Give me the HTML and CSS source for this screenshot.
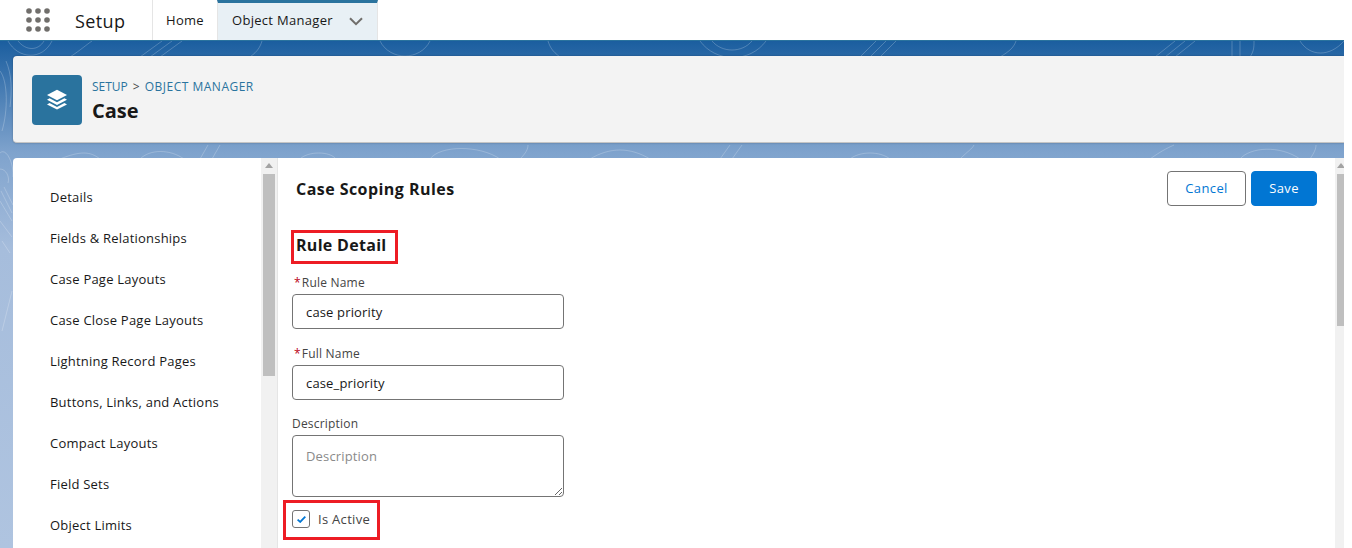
FILE: index.html
```html
<!DOCTYPE html>
<html>
<head>
    <title>Case Scoping Rules</title>
    <link rel="stylesheet" href="styles.css">
</head>
<body>
    <div class="topbar">
        <div class="launcher">
            <svg width="26" height="26" viewBox="0 0 26 26" fill="#706e6b">
                <circle cx="3" cy="3" r="2.8"/><circle cx="12" cy="3" r="2.8"/><circle cx="21" cy="3" r="2.8"/>
                <circle cx="3" cy="12" r="2.8"/><circle cx="12" cy="12" r="2.8"/><circle cx="21" cy="12" r="2.8"/>
                <circle cx="3" cy="21" r="2.8"/><circle cx="12" cy="21" r="2.8"/><circle cx="21" cy="21" r="2.8"/>
            </svg>
        </div>
        <div class="app-name">Setup</div>
        <div class="tab">Home</div>
        <div class="tab tab-active">
            Object Manager
            <svg class="chevron" width="14" height="9" viewBox="0 0 14 9" fill="none" stroke="#706e6b" stroke-width="2">
                <path d="M1 1.2l6 6 6-6"/>
            </svg>
        </div>
    </div>

    <div class="stage">
        <svg class="contours" width="1352" height="508" viewBox="0 0 1352 508" fill="none" stroke="#fff" stroke-opacity="0.22">
            <path d="M8 0c10 18 34 20 44 0M18 0c8 10 20 10 26 0M70 16c12-8 16-12 22-16M140 16l22-16M150 16l22-16M160 16l22-16M250 16c8-6 10-10 12-16M380 0c10 20 40 20 50 0M560 16c-8-6-10-10-12-16M700 0c16 22 50 22 66 0M712 0c10 12 30 12 40 0M860 16l16-16M870 16l16-16M880 16l16-16M1000 16c10-6 14-10 16-16M1155 16l20-16M1165 16l20-16M1175 16l20-16M1232 16V0M1240 16V0M1250 16c4-6 4-10 4-16M1300 0c10 16 30 16 44 0"/>
            <path d="M0 30c8 10 8 40 2 60M6 20c6 14 6 30 4 46M0 112c6-6 14 10 13 24M0 128c6 0 10 8 8 14M1 150l11 22M0 160l12 20M4 146l9 18M0 180l12 16M2 200l8 12M12 250l-10 40"/>
            <path d="M60 118c20-8 30-8 40 0M140 118c10-10 30-10 44 0M200 118l8-14M212 118l8-14M300 118c8-8 30-8 36 0M430 118c10-14 50-14 70 0M520 118c6-6 8-10 8-14M590 118c20-12 40-12 60 0M720 118l10-14M732 118l10-14M850 118c10-8 30-8 40 0M960 118c8-8 12-10 14-14M1150 118c14-10 20-12 24-14M1240 118c10-12 40-14 60 0M1310 118c4-6 6-10 6-14"/>
        </svg>

        <div class="page-header">
            <div class="object-icon">
                <svg width="22" height="22" viewBox="0 0 22 22" fill="#fff">
                    <path d="M11 0.8l10 5.2-10 5.2-10-5.2z"/>
                    <path d="M3.6 9.3l7.4 3.9 7.4-3.9 2.6 1.4-10 5.2-10-5.2z"/>
                    <path d="M3.6 14l7.4 3.9 7.4-3.9 2.6 1.4-10 5.2-10-5.2z"/>
                </svg>
            </div>
            <div class="header-text">
                <div class="crumbs"><span class="crumb">SETUP</span><span class="crumb-sep">&gt;</span><span class="crumb crumb-wide">OBJECT MANAGER</span></div>
                <div class="object-name">Case</div>
            </div>
        </div>

        <div class="panels">
            <div class="sidebar">
                <ul class="side-list">
                    <li>Details</li>
                    <li>Fields &amp; Relationships</li>
                    <li>Case Page Layouts</li>
                    <li>Case Close Page Layouts</li>
                    <li>Lightning Record Pages</li>
                    <li>Buttons, Links, and Actions</li>
                    <li>Compact Layouts</li>
                    <li>Field Sets</li>
                    <li>Object Limits</li>
                </ul>
                <div class="scroll scroll-side">
                    <div class="scroll-arrow"></div>
                    <div class="scroll-thumb thumb-side"></div>
                </div>
            </div>

            <div class="main">
                <div class="main-body">
                    <div class="main-head">
                        <h1 class="rule-title">Case Scoping Rules</h1>
                        <div class="actions">
                            <button class="btn btn-cancel">Cancel</button>
                            <button class="btn btn-save">Save</button>
                        </div>
                    </div>

                    <h2 class="section-title"><span class="mark mark-title">Rule Detail</span></h2>

                    <div class="field">
                        <label class="field-label"><span class="req">*</span>Rule Name</label>
                        <input class="input" type="text" value="case priority">
                    </div>
                    <div class="field">
                        <label class="field-label"><span class="req">*</span>Full Name</label>
                        <input class="input" type="text" value="case_priority">
                    </div>
                    <div class="field field-tight">
                        <label class="field-label">Description</label>
                        <textarea class="input textarea" placeholder="Description"></textarea>
                    </div>
                    <div class="mark mark-check">
                        <span class="checkbox">
                            <svg width="9" height="7" viewBox="0 0 9 7" fill="none" stroke="#0176d3" stroke-width="1.8">
                                <path d="M0.6 3.6l2.6 2.3 5.1-5.2"/>
                            </svg>
                        </span>
                        Is Active
                    </div>
                </div>
                <div class="scroll scroll-main">
                    <div class="scroll-arrow"></div>
                    <div class="scroll-thumb thumb-main"></div>
                </div>
            </div>
        </div>
    </div>
</body>
</html>
```

FILE: styles.css
```css
html, body {
    height: 100%;
}

body {
    font-family: "Open Sans", Arial, sans-serif;
    font-size: 13px;
    letter-spacing: 0.3px;
    color: #181818;
    margin: 0;
    padding: 0;
    overflow: hidden;
    background-color: #fff;
}

.topbar {
    height: 40px;
    display: flex;
    background-color: #fff;
}

.launcher {
    width: 75px;
    padding: 8px 0 0 26px;
    box-sizing: border-box;
}

.app-name {
    width: 77px;
    font-size: 18px;
    line-height: 42px;
    letter-spacing: 0.4px;
    color: #181818;
}

.tab {
    width: 65px;
    box-sizing: border-box;
    padding: 0 13px;
    line-height: 40px;
    border-left: 1px solid #e5e5e5;
}

.tab-active {
    width: 161px;
    display: flex;
    align-items: center;
    justify-content: space-between;
    padding: 0 14px 3px;
    background-color: #e8f0f5;
    border-top: 3px solid #2a739e;
    border-right: 1px solid #e5e5e5;
    line-height: 34px;
}

.chevron {
    margin: 2px 0 0 0;
}

.stage {
    position: relative;
    width: 1344px;
    height: 508px;
    box-sizing: border-box;
    padding: 15px 0 0 13px;
    border-top: 1px solid #2a739e;
    background: linear-gradient(180deg, #1b5e9f 0%, #7fa3cd 22%, #a6bddc 41%, #afc4e0 100%);
    overflow: hidden;
}

.contours {
    position: absolute;
    left: 0;
    top: 0;
}

.page-header {
    position: relative;
    height: 87px;
    box-sizing: border-box;
    display: flex;
    align-items: center;
    gap: 10px;
    padding: 2px 0 0 19px;
    background-color: #f3f3f3;
    border-radius: 4px 0 0 4px;
    border-bottom: 1px solid #c4c4c4;
    box-shadow: 0 0 2px rgba(0, 0, 0, 0.3);
}

.object-icon {
    width: 50px;
    height: 50px;
    border-radius: 4px;
    background-color: #2a739e;
    display: flex;
    align-items: center;
    justify-content: center;
}

.header-text {
    margin-top: 4px;
}

.crumbs {
    font-size: 12px;
    line-height: 18px;
    letter-spacing: 0;
    color: #444;
}

.crumb {
    color: #2a739e;
}

.crumb-sep {
    margin: 0 5px;
}

.crumb-wide {
    letter-spacing: 0.5px;
}

.object-name {
    font-size: 20px;
    font-weight: 700;
    line-height: 30px;
    letter-spacing: 0;
}

.panels {
    position: relative;
    display: flex;
    height: 390px;
    margin-top: 15px;
}

.sidebar {
    width: 264px;
    display: flex;
    background-color: #fff;
    border-radius: 4px 0 0 0;
    border-right: 1px solid #e5e5e5;
}

.side-list {
    flex: 1;
    list-style: none;
    margin: 0;
    padding: 19px 0 0 37px;
    letter-spacing: 0.22px;
}

.side-list li {
    height: 41px;
    line-height: 41px;
}

.scroll {
    width: 16px;
    background-color: #f1f1f1;
    box-sizing: border-box;
    padding: 0 2px;
}

.scroll-arrow {
    width: 0;
    height: 0;
    margin: 5px auto 6px;
    border-left: 4px solid transparent;
    border-right: 4px solid transparent;
    border-bottom: 5px solid #a3a3a3;
}

.scroll-thumb {
    background-color: #bfbfbf;
}

.thumb-side {
    height: 202px;
}

.thumb-main {
    height: 152px;
}

.main {
    flex: 1;
    display: flex;
    background-color: #fff;
}

.main-body {
    flex: 1;
    padding-left: 14px;
}

.main-head {
    display: flex;
    justify-content: space-between;
    align-items: center;
    height: 34px;
    margin: 13px 0 0 4px;
    padding-right: 18px;
}

.rule-title {
    margin: 2px 0 0 0;
    font-size: 16px;
    font-weight: 700;
    letter-spacing: 0.45px;
}

.actions {
    display: flex;
    gap: 5px;
}

.btn {
    height: 35px;
    border-radius: 4px;
    font-family: inherit;
    font-size: 13px;
    letter-spacing: 0.4px;
    padding: 0;
}

.btn-cancel {
    width: 79px;
    background-color: #fff;
    border: 1px solid #747474;
    color: #0176d3;
}

.btn-save {
    width: 66px;
    background-color: #0176d3;
    border: 1px solid #0176d3;
    color: #fff;
}

.section-title {
    margin: 25px 0 0 0;
    font-size: 16px;
    font-weight: 700;
    line-height: 22px;
    letter-spacing: 0.3px;
}

.mark {
    outline: 3px solid #ed1c24;
    outline-offset: -3px;
}

.mark-title {
    display: inline-block;
    padding: 4px 11px 8px 5px;
    margin-left: -1px;
}

.field {
    margin-top: 10px;
    color: #444;
}

.field + .field {
    margin-top: 16px;
}

.field + .field-tight {
    margin-top: 15px;
}

.field-label {
    display: block;
    font-size: 12px;
    line-height: 18px;
    letter-spacing: 0.2px;
    margin-bottom: 2px;
}

.req {
    color: #ba0517;
    margin: 0 1px 0 2px;
}

.input {
    display: block;
    width: 272px;
    height: 35px;
    box-sizing: border-box;
    padding: 0 13px;
    border: 1px solid #747474;
    border-radius: 4px;
    font-family: inherit;
    font-size: 13px;
    letter-spacing: 0.15px;
    color: #181818;
    background-color: #fff;
}

.textarea {
    height: 62px;
    padding-top: 11px;
}

.textarea::placeholder {
    color: #8a8a8a;
}

.mark-check {
    display: flex;
    align-items: center;
    gap: 8px;
    width: 97px;
    height: 40px;
    box-sizing: border-box;
    margin: 3px 0 0 -9px;
    padding: 0 0 2px 9px;
    color: #444;
}

.checkbox {
    width: 18px;
    height: 18px;
    box-sizing: border-box;
    border: 1px solid #747474;
    border-radius: 3px;
    display: flex;
    align-items: center;
    justify-content: center;
}

.scroll-main {
    width: 9px;
    padding: 0 0 0 2px;
}
```
